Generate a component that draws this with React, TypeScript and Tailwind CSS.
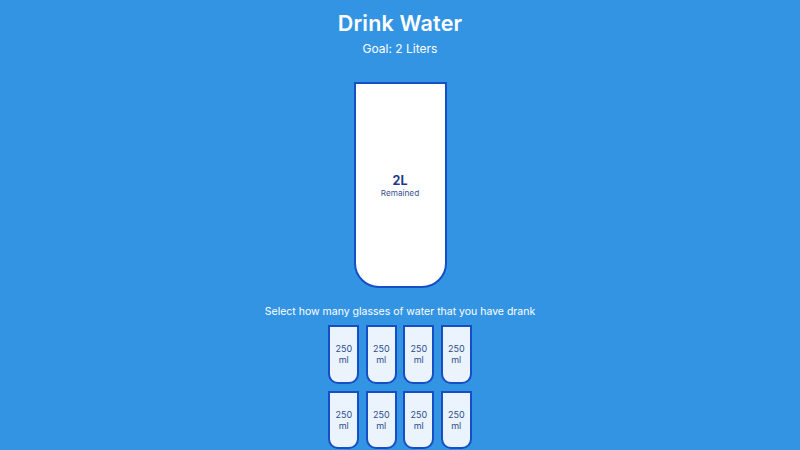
import React from 'react';

const font = { fontFamily: 'Inter, "Open Sans", sans-serif' };

const SmallCup: React.FC = () => (
  <div className="flex h-[58.5px] w-[31px] cursor-pointer flex-col items-center justify-center rounded-b-[10px] border-[2.5px] border-[#144fc6] bg-white/90 text-center text-[9px] leading-[11px] text-[#2d4c8f]">
    <span>250</span>
    <span>ml</span>
  </div>
);

const App: React.FC = () => {
  const cups = Array.from({ length: 8 });

  return (
    <div className="flex min-h-screen flex-col items-center bg-[#3494e4] text-white" style={font}>
      <h1 className="mt-[11px] text-[21.5px] font-semibold leading-[24px] tracking-[0.2px]">Drink Water</h1>
      <h3 className="mt-[7px] text-[12px] font-normal leading-[14px]">Goal: 2 Liters</h3>

      <div className="mt-[26px] flex h-[206px] w-[93px] flex-col items-center justify-center rounded-b-[25px] border-[2.5px] border-[#144fc6] bg-white text-[#1e3a8a]">
        <div className="flex flex-col items-center">
          <span className="text-[12.5px] font-bold leading-[15px]">2L</span>
          <small className="text-[8.2px] leading-[10px] text-[#3a5590]">Remained</small>
        </div>
      </div>

      <p className="mt-[18px] text-[10.5px] leading-[12px]">Select how many glasses of water that you have drank</p>

      <div className="mt-[7px] grid grid-cols-4 gap-x-[6.5px] gap-y-[7px]">
        {cups.map((_, i) => (
          <SmallCup key={i} />
        ))}
      </div>
    </div>
  );
};

export default App;
